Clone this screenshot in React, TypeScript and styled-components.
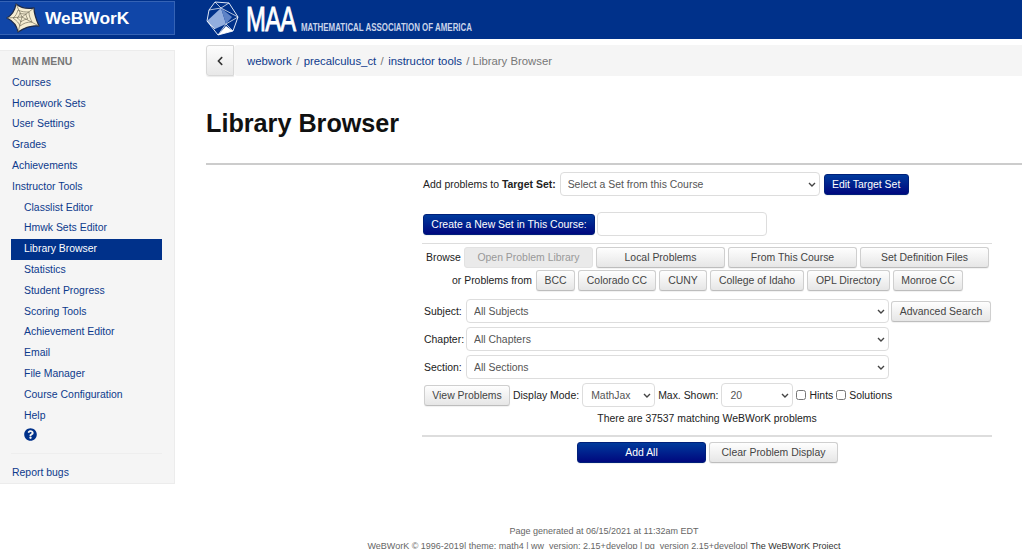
import React from "react";
import styled, { createGlobalStyle, css } from "styled-components";
import { FaChevronLeft, FaQuestionCircle } from "react-icons/fa";

const Global = createGlobalStyle`
  html, body { margin: 0; padding: 0; height: 549px; overflow: hidden; background: #fff; }
  body { font-family: "Liberation Sans", Arial, sans-serif; font-size: 10.45px; color: #222; }
  * { box-sizing: border-box; }
`;

const Page = styled.div`display: flex; flex-direction: column; width: 1022px;`;
const Header = styled.header`
  height: 39px; background: #00318a; display: flex; align-items: flex-start;
`;
const Brand = styled.a`
  width: 175px; height: 34px; margin-top: 1px; background: #1046a8; border: 1px solid #3563b5; border-left: 0;
  display: flex; align-items: center; padding-left: 6px; gap: 5px;
  color: #fff; font-size: 17.4px; font-weight: 700;
`;
const MaaLogo = styled.div`display: flex; align-items: flex-start; margin-left: 31px; height: 39px; color: #fff;`;
const MaaMark = styled.span`
  font-size: 35px; font-weight: 400; -webkit-text-stroke: .9px #fff; line-height: 36px; margin: 1px 0 0 5px; width: 50px; letter-spacing: -1px;
  display: inline-block; transform: scaleX(0.68); transform-origin: left center; white-space: nowrap;
`;
const MaaName = styled.span`
  font-size: 10.5px; font-weight: 700; color: #c9d4ea; margin: 21px 0 0 5px; white-space: nowrap; width: 172px;
  display: inline-block; transform: scaleX(0.755); transform-origin: left center;
`;

const Body = styled.div`display: flex; align-items: flex-start;`;
const Sidebar = styled.nav`
  width: 175px; margin-top: 11px; height: 434px; background: #f5f5f5; padding-top: 1px;
  border-top: 1px solid #ececec; border-right: 1px solid #ececec; border-bottom: 1px solid #ececec;
  padding-left: 11px;
`;
const MenuItem = styled.div<{ $sub?: boolean; $active?: boolean }>`
  width: 151px; height: 20.8px; line-height: 20.8px; color: #0d3a8c; white-space: nowrap;
  padding-left: ${(p) => (p.$sub ? 13 : 1)}px;
  ${(p) => p.$active && css`background: #00318a; color: #fff;`}
`;
const MenuTitle = styled(MenuItem)`font-weight: 700; color: #777;`;
const HelpIcon = styled.div`height: 16px; padding-left: 13px; color: #00318a; display: flex; align-items: center; font-size: 13px;`;
const MenuDivider = styled.div`width: 151px; height: 1px; background: #eee; margin-top: 11px;`;
const ReportItem = styled(MenuItem)`margin-top: 9px;`;

const Main = styled.main`width: 816px; margin-left: 31px; display: flex; flex-direction: column;`;
const Crumbs = styled.div`display: flex; height: 31px; margin-top: 6px;`;
const BackBtn = styled.div`
  width: 28px; height: 31px; border: 1px solid #d8d8d8; border-radius: 3px 0 0 3px;
  background: linear-gradient(#fdfdfd, #e8e8e8); display: flex; align-items: center; justify-content: center;
  color: #333; font-size: 10px; box-shadow: 0 1px 1px rgba(0,0,0,.08);
`;
const CrumbBar = styled.div`
  flex: 1; background: #f5f5f5; border-radius: 4px 0 0 4px; display: flex; align-items: center; padding-left: 13px; gap: 4.4px;
  font-size: 11.35px; color: #777;
`;
const CrumbLink = styled.a`color: #0d3a8c;`;
const Title = styled.h1`margin: 32px 0 0; font-size: 25.2px; line-height: 30px; font-weight: 700; color: #111; height: 30px;`;
const TopRule = styled.div`height: 2px; background: #ccc; margin-top: 25px;`;

const Form = styled.div`width: 570px; margin-left: 216px; display: flex; flex-direction: column; color: #222;`;
const Row = styled.div<{ $h: number; $mt?: number; $pl?: number; $gap?: number }>`
  display: flex; align-items: center; height: ${(p) => p.$h}px; margin-top: ${(p) => p.$mt ?? 0}px;
  padding-left: ${(p) => p.$pl ?? 0}px; gap: ${(p) => p.$gap ?? 3}px; white-space: nowrap;
`;
const Label = styled.span<{ $w?: number }>`
  display: inline-block; ${(p) => p.$w && css`width: ${p.$w}px;`}
`;
const Btn = styled.button<{ $w: number; $disabled?: boolean }>`
  width: ${(p) => p.$w}px; height: 21px; padding: 0; flex: none;
  font: inherit; color: #444; border: 1px solid #cfcfcf; border-bottom-color: #bdbdbd; border-radius: 3px;
  background: linear-gradient(#fefefe, #e6e6e6); box-shadow: 0 1px 1px rgba(0,0,0,.06);
  ${(p) => p.$disabled && css`background: #eaeaea; color: #999; border-color: #e2e2e2; box-shadow: none;`}
`;
const PrimaryBtn = styled(Btn)`
  color: #fff; border: 1px solid #00207a; background: linear-gradient(#003a9c, #00087e);
`;
const SelectWrap = styled.span<{ $w: number }>`
  position: relative; display: inline-block; flex: none; width: ${(p) => p.$w}px; height: 24px;
`;
const SelectBox = styled.select<{ $pad: number }>`
  width: 100%; height: 100%; font: inherit; color: #555; background: #fff; appearance: none;
  border: 1px solid #ddd; border-radius: 4px; padding: 0 14px 0 ${(p) => p.$pad}px;
`;
const Caret = styled.svg`
  position: absolute; right: 4px; top: 10px; width: 8px; height: 5px; pointer-events: none;
`;
const Select = ({ w, label, pad = 7 }: { w: number; label: string; pad?: number }) => (
  <SelectWrap $w={w}>
    <SelectBox $pad={pad}><option>{label}</option></SelectBox>
    <Caret viewBox="0 0 8 5"><path d="M1 1 L4 4 L7 1" fill="none" stroke="#444" strokeWidth="1.4" /></Caret>
  </SelectWrap>
);
const TextInput = styled.input`
  width: 170px; height: 24px; border: 1px solid #ddd; border-radius: 4px; background: #fff; padding: 0;
`;
const Rule = styled.div<{ $mt: number; $h?: number }>`height: ${(p) => p.$h ?? 1}px; background: #ddd; margin-top: ${(p) => p.$mt}px;`;
const Check = styled.input`width: 10px; height: 10px; margin: 0; flex: none;`;
const Count = styled.div`text-align: center; height: 16px; line-height: 16px; margin-top: 4px; width: 570px;`;
const Footer = styled.footer`
  display: flex; flex-direction: column; align-items: center; padding-right: 20px; margin-top: 61px;
  font-size: 9px; color: #666; line-height: 15px; white-space: nowrap;
`;
const FooterLink = styled.a`color: #333;`;

const Star = () => (
  <svg width="34" height="30" viewBox="0 0 34 30">
    <path d="M10 1 C15 5 22 6 28 5 C28 11 30 16 33 23 C25 22 18 25 12 29 C11 23 7 18 1 15 C6 12 9 7 10 1Z" fill="#f5edd2" stroke="#1d2a4a" strokeWidth="1.3" strokeLinejoin="round" />
    <g fill="none" stroke="#75705c" strokeWidth=".7">
      <path d="M16 14 L10 1 M16 14 L28 5 M16 14 L33 23 M16 14 L12 29 M16 14 L1 15" />
      <path d="M12 7 C16 9 19 9 23 9 C23 13 24 15 26 19 C21 19 18 20 14 23 C13 20 11 18 7 15 C10 13 11 10 12 7Z" />
      <path d="M14 10 C16 11 18 11 20 11 C20 13 21 15 22 16 C20 16 17 17 15 19 C14 17 13 16 11 15 C13 14 13 12 14 10Z" />
    </g>
  </svg>
);

const Icosa = () => (
  <svg width="35" height="37" viewBox="0 0 35 37">
    <path d="M9 2 L23 3 L32 17 L27 31 L12 35 L1 21 L3 10Z" fill="#00318a" stroke="#dfe7f6" strokeWidth="1" strokeLinejoin="round" />
    <path d="M1 21 L15 8 L20 24 L9 29Z" fill="#93aede" />
    <path d="M15 8 L26 17 L20 24Z" fill="#5d82c6" />
    <path d="M12 35 L20 26 L27 31Z" fill="#fff" />
    <path d="M9 2 L15 8 L23 3 M15 8 L32 17 L20 24 L27 31 M20 24 L12 35 M3 10 L15 8 M9 29 L1 21" fill="none" stroke="#fff" strokeWidth=".7" />
  </svg>
);

const top1 = ["Courses", "Homework Sets", "User Settings", "Grades", "Achievements", "Instructor Tools"];
const subs = ["Classlist Editor", "Hmwk Sets Editor", "Library Browser", "Statistics", "Student Progress", "Scoring Tools", "Achievement Editor", "Email", "File Manager", "Course Configuration", "Help"];
const browse = ["Local Problems", "From This Course", "Set Definition Files"];
const sources: [string, number][] = [["BCC", 39], ["Colorado CC", 78], ["CUNY", 48], ["College of Idaho", 94], ["OPL Directory", 83], ["Monroe CC", 70]];

export default function App() {
  return (
    <Page>
      <Global />
      <Header>
        <Brand><Star />WeBWorK</Brand>
        <MaaLogo>
          <Icosa />
          <MaaMark>MAA</MaaMark>
          <MaaName>MATHEMATICAL ASSOCIATION OF AMERICA</MaaName>
        </MaaLogo>
      </Header>
      <Body>
        <Sidebar>
          <MenuTitle>MAIN MENU</MenuTitle>
          {top1.map((t) => <MenuItem key={t}>{t}</MenuItem>)}
          {subs.map((t) => <MenuItem key={t} $sub $active={t === "Library Browser"}>{t}</MenuItem>)}
          <HelpIcon><FaQuestionCircle /></HelpIcon>
          <MenuDivider />
          <ReportItem>Report bugs</ReportItem>
        </Sidebar>
        <Main>
          <Crumbs>
            <BackBtn><FaChevronLeft /></BackBtn>
            <CrumbBar>
              <CrumbLink>webwork</CrumbLink> / <CrumbLink>precalculus_ct</CrumbLink> / <CrumbLink>instructor tools</CrumbLink> / Library Browser
            </CrumbBar>
          </Crumbs>
          <Title>Library Browser</Title>
          <TopRule />
          <Form>
            <Row $h={24} $mt={7} $pl={1} $gap={4}>
              <Label>Add problems to <b>Target Set:</b></Label>
              <Select w={260} label="Select a Set from this Course" />
              <PrimaryBtn $w={85}>Edit Target Set</PrimaryBtn>
            </Row>
            <Row $h={24} $mt={16} $pl={1} $gap={2}>
              <PrimaryBtn $w={172}>Create a New Set in This Course:</PrimaryBtn>
              <TextInput />
            </Row>
            <Rule $mt={7} />
            <Row $h={21} $mt={3} $pl={4} $gap={3}>
              <Label $w={35}>Browse</Label>
              <Btn $w={129} $disabled>Open Problem Library</Btn>
              {browse.map((b) => <Btn key={b} $w={129}>{b}</Btn>)}
            </Row>
            <Row $h={21} $mt={2} $pl={30} $gap={3}>
              <Label $w={81}>or Problems from</Label>
              {sources.map(([s, w]) => <Btn key={s} $w={w}>{s}</Btn>)}
            </Row>
            <Row $h={24} $mt={8} $pl={2} $gap={2}>
              <Label $w={40}>Subject:</Label>
              <Select w={423} label="All Subjects" />
              <Btn $w={100}>Advanced Search</Btn>
            </Row>
            <Row $h={24} $mt={4} $pl={2} $gap={2}>
              <Label $w={40}>Chapter:</Label>
              <Select w={423} label="All Chapters" />
            </Row>
            <Row $h={24} $mt={4} $pl={2} $gap={2}>
              <Label $w={40}>Section:</Label>
              <Select w={423} label="All Sections" />
            </Row>
            <Row $h={24} $mt={4} $pl={2} $gap={3}>
              <Btn $w={86}>View Problems</Btn>
              <Label>Display Mode:</Label>
              <Select w={73} label="MathJax" pad={8} />
              <Label>Max. Shown:</Label>
              <Select w={72} label="20" pad={8} />
              <Check type="checkbox" />
              <Label>Hints</Label>
              <Check type="checkbox" />
              <Label>Solutions</Label>
            </Row>
            <Count>There are 37537 matching WeBWorK problems</Count>
            <Rule $mt={8} $h={2} />
            <Row $h={21} $mt={5} $pl={155} $gap={3}>
              <PrimaryBtn $w={129}>Add All</PrimaryBtn>
              <Btn $w={129}>Clear Problem Display</Btn>
            </Row>
          </Form>
          <Footer>
            <span>Page generated at 06/15/2021 at 11:32am EDT</span>
            <span>WeBWorK © 1996-2019| theme: math4 | ww_version: 2.15+develop | pg_version 2.15+develop| <FooterLink>The WeBWorK Project</FooterLink></span>
          </Footer>
        </Main>
      </Body>
    </Page>
  );
}
